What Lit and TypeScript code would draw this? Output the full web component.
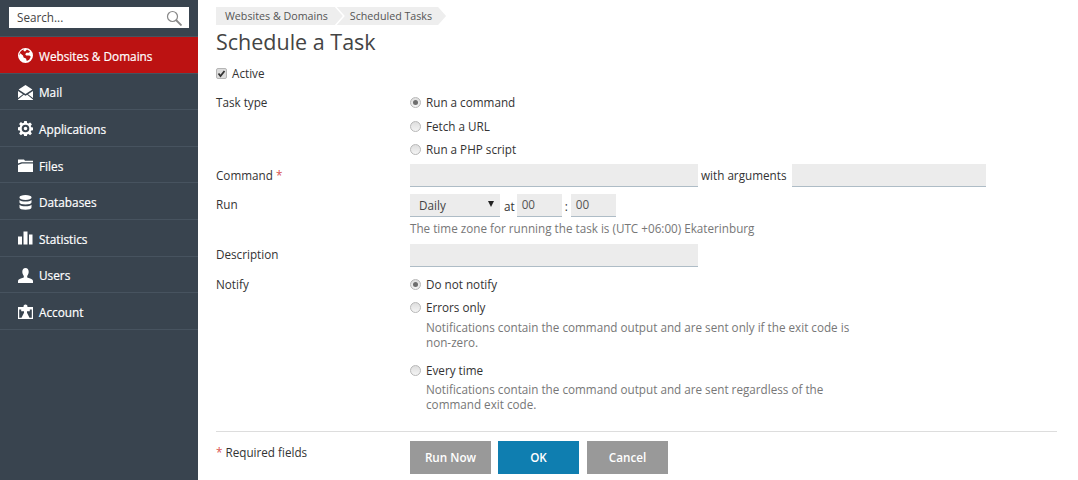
import { LitElement, html, css, svg } from "lit";
import { customElement } from "lit/decorators.js";

const icons: Record<string, unknown> = {
  globe: svg`<path fill-rule="evenodd" d="M7.500 0a7.500 7.500 0 1 0 0 15 7.500 7.500 0 0 0 0-15zM9 1.600l3 1.600-1 1.600H8.400L7.200 6.200l1 1.400h3.200l1.400 1.200-1.600 3-2.400 1.200-.8-2.600-2.400-1-.6-1.800L2.200 5.200 1.600 7.400 1.400 6A6 6 0 0 1 6 1.600l-.6 1.200 1.600.6z"/>`,
  mail: svg`<path d="M7.500 0 14.400 4.600 7.500 9 .6 4.600zM0 6l5 3.200L0 13zM15 6v7l-5-3.800zM5.800 9.800l1.700 1 1.700-1L15 14.400V15H0v-.6z"/>`,
  gear: svg`<path fill-rule="evenodd" d="M6.200 0h2.600l.3 2 1.300.6 1.700-1.200 1.800 1.800-1.200 1.700.6 1.300 2 .3v2.600l-2 .3-.6 1.300 1.200 1.700-1.800 1.800-1.700-1.200-1.300.6-.3 2H6.200l-.3-2-1.300-.6-1.700 1.200-1.800-1.800 1.200-1.700-.6-1.300-2-.3V6.200l2-.3.6-1.300-1.200-1.700 1.800-1.800 1.700 1.200 1.300-.6zM7.500 3.700a3.800 3.800 0 1 0 0 7.600 3.800 3.800 0 0 0 0-7.600zm0 2a1.800 1.800 0 1 1 0 3.600 1.800 1.800 0 0 1 0-3.600z"/>`,
  folder: svg`<path d="M0 1.500h6l1 1.200h8v1.600H3.500L0 5.500zM0 7l4-1.500h11v8.500H0z"/>`,
  db: svg`<path d="M7.500 0C11 0 13.500 1 13.500 2.200v.6c0 1.200-2.500 2.200-6 2.200s-6-1-6-2.200v-.6C1.500 1 4 0 7.500 0zM1.500 5c1.200 1 3.500 1.500 6 1.500S12.300 6 13.500 5v2.500c0 1.200-2.500 2-6 2s-6-.8-6-2zM1.500 9.800c1.200 1 3.500 1.500 6 1.500s4.800-.5 6-1.500v2.700c0 1.300-2.500 2.300-6 2.300s-6-1-6-2.300z"/>`,
  stats: svg`<path d="M0 5.500h4v8H0zM5.500.5h4v13h-4zM11 3.500h3.500v10H11z"/>`,
  user: svg`<path d="M7.500 0c2 0 3.200 1.500 3.200 3.800 0 1.700-.7 3.200-1.500 4.200v1.400l3 1.200c1.600.6 2.800 1.400 2.800 2.400v2H0v-2c0-1 1.200-1.800 2.800-2.400l3-1.200V8C5 7 4.300 5.500 4.300 3.800 4.300 1.500 5.500 0 7.500 0z"/>`,
  account: svg`<path fill-rule="evenodd" d="M0 3h5.600a2 2 0 1 1 3.800 0H15v12H0zM1.200 4.200v9.600h2.300l2.500-5V7.200H3.200V5.400H1.200zm12.600 0v1.200h-2v1.800H9v1.600l2.500 5h2.300z"/>`,
};

const nav: [string, string, boolean?][] = [
  ["globe", "Websites & Domains", true],
  ["mail", "Mail"],
  ["gear", "Applications"],
  ["folder", "Files"],
  ["db", "Databases"],
  ["stats", "Statistics"],
  ["user", "Users"],
  ["account", "Account"],
];

@customElement("app-root")
export class AppRoot extends LitElement {
  static styles = css`
    :host {
      display: flex;
      width: 1078px;
      height: 480px;
      overflow: hidden;
      font-family: "Open Sans", sans-serif;
      font-size: 11.7px;
      line-height: 17px;
      color: #333;
      background: #fff;
    }
    .side {
      width: 198px;
      flex: none;
      background: #39444f;
      display: flex;
      flex-direction: column;
    }
    .searchbox {
      height: 36px;
      flex: none;
      box-sizing: content-box;
      padding: 0;
      border-bottom: 1px solid #47535f;
      display: flex;
      align-items: flex-start;
    }
    .search {
      flex: 1;
      margin: 7px 9px 0;
      height: 21px;
      background: #fff;
      display: flex;
      align-items: center;
      justify-content: space-between;
      padding: 0 7px 0 8px;
      color: #444;
    }
    .search svg { width: 16px; height: 16px; }
    .item {
      height: 36.6px;
      flex: none;
      box-sizing: border-box;
      border-bottom: 1px solid #47535f;
      display: flex;
      align-items: center;
      gap: 6px;
      padding: 3px 0 0 18px;
      color: #fff;
      font-size: 11.8px;
      -webkit-text-stroke: 0.2px #fff;
    }
    .item.active {
      background: #bc1212;
    }
    .item svg {
      width: 15px;
      height: 15px;
      fill: #fff;
      flex: none;
      margin-top: -1px;
    }
    .main {
      flex: 1;
      padding: 7px 21px 0 18px;
      display: flex;
      flex-direction: column;
      min-width: 0;
    }
    .crumbs { display: flex; height: 18px; color: #555; font-size: 10.7px; line-height: 18px; }
    .crumb {
      background: #eee;
      padding: 0 15px 0 9px;
      clip-path: polygon(0 0, calc(100% - 8px) 0, 100% 50%, calc(100% - 8px) 100%, 0 100%);
    }
    .crumb + .crumb {
      margin-left: -6px;
      padding: 0 14px 0 13px;
      clip-path: polygon(0 0, calc(100% - 8px) 0, 100% 50%, calc(100% - 8px) 100%, 0 100%, 8px 50%);
    }
    h1 {
      margin: 2px 0 0;
      font-size: 21.5px;
      line-height: 29px;
      font-weight: 400;
      color: #444;
    }
    .active-row {
      display: flex;
      align-items: center;
      gap: 5px;
      margin-top: 9px;
      height: 17px;
    }
    .form {
      display: grid;
      grid-template-columns: 194px 1fr;
      margin-top: 12px;
    }
    .stack { display: flex; flex-direction: column; }
    .r {
      display: flex;
      align-items: center;
      gap: 5px;
      height: 17px;
    }
    .gap6 { margin-top: 6.5px; }
    .radio {
      width: 9px;
      height: 9px;
      border-radius: 50%;
      border: 1px solid #b8b8b8;
      background: linear-gradient(#dedede, #f4f4f4);
      flex: none;
      display: flex;
      align-items: center;
      justify-content: center;
    }
    .radio.on::after {
      content: "";
      width: 5px;
      height: 5px;
      border-radius: 50%;
      background: #6e6e6e;
    }
    .check {
      width: 9px;
      height: 9px;
      border: 1px solid #b5b5b5;
      border-radius: 2px;
      background: #dcdcdc;
      flex: none;
      display: block;
    }
    .check svg { display: block; width: 9px; height: 9px; }
    .inp {
      background: #ececec;
      border-bottom: 1px solid #aebcc6;
      height: 22px;
      color: #555;
    }
    .w288 { width: 288px; }
    .w194 { width: 194px; }
    .w45 { width: 40px; line-height: 20px; padding-left: 5px; }
    .line { display: flex; align-items: center; height: 23px; }
    .req { color: #d9534f; }
    .sel {
      width: 81px;
      padding-left: 9px;
      line-height: 22px;
      position: relative;
      color: #444;
    }
    .sel i {
      width: 0;
      height: 0;
      border-left: 3.5px solid transparent;
      border-right: 3.5px solid transparent;
      border-top: 6px solid #222;
      position: absolute;
      right: 6px;
      top: 7px;
    }
    .hint { color: #777; }
    .note { margin-left: 16px; width: 430px; line-height: 15px; }
    .hr { height: 1px; background: #ddd; margin-top: 19px; }
    .foot {
      display: grid;
      grid-template-columns: 194px 1fr;
      margin-top: 9px;
    }
    .btns { display: flex; gap: 7px; }
    .btn {
      width: 81px;
      height: 33px;
      background: #999;
      color: #fff;
      font-weight: 600;
      display: flex;
      align-items: center;
      justify-content: center;
    }
    .btn.ok { background: #0f7eb0; }
    .btn.last { margin-left: 1px; }
    .lab-cmd { margin-top: 9px; }
    .line-cmd { margin-top: 6px; }
    .lab-run { margin-top: 9px; }
    .line-run { margin-top: 7px; }
    .at { margin: 2px 2px 0 4px; }
    .colon { margin: 2px 3px 0 3px; }
    .args { margin: 0 6px 0 3px; white-space: nowrap; }
    .hint-tz { margin-top: 3px; }
    .lab-desc { margin-top: 9px; }
    .line-desc { margin-top: 7px; }
    .lab-notify, .stack-notify { margin-top: 9px; }
    .gap-err { margin-top: 6px; }
    .note-a { margin-top: 4px; }
    .r-every { margin-top: 12px; }
    .note-b { margin-top: 3px; }
    .req-foot { margin-top: 3px; }
  `;

  render() {
    return html`
      <aside class="side">
        <div class="searchbox">
          <div class="search">
            <span>Search...</span>
            <svg viewBox="0 0 16 16" fill="none" stroke="#888" stroke-width="1.2">
              <circle cx="6.5" cy="6.5" r="5" />
              <path d="M10 10l5.500 5.500" stroke-width="1.8" />
            </svg>
          </div>
        </div>
        ${nav.map(
          ([i, t, a]) => html`<div class="item ${a ? "active" : ""}">
            <svg viewBox="0 0 15 15">${icons[i]}</svg><span>${t}</span>
          </div>`
        )}
      </aside>
      <main class="main">
        <nav class="crumbs">
          <span class="crumb">Websites &amp; Domains</span>
          <span class="crumb">Scheduled Tasks</span>
        </nav>
        <h1>Schedule a Task</h1>
        <div class="active-row">
          <span class="check"><svg viewBox="0 0 9 9"><path d="M1.500 4.500l2 2.500 4-5" fill="none" stroke="#333" stroke-width="1.8"/></svg></span>
          <span>Active</span>
        </div>
        <div class="form">
          <div>Task type</div>
          <div class="stack">
            <div class="r"><span class="radio on"></span>Run a command</div>
            <div class="r gap6"><span class="radio"></span>Fetch a URL</div>
            <div class="r gap6"><span class="radio"></span>Run a PHP script</div>
          </div>

          <div class="lab-cmd">Command <span class="req">*</span></div>
          <div class="line line-cmd">
            <span class="inp w288"></span><span class="args">with arguments</span><span class="inp w194"></span>
          </div>

          <div class="lab-run">Run</div>
          <div class="line line-run">
            <span class="inp sel">Daily<i></i></span>
            <span class="at">at</span>
            <span class="inp w45">00</span>
            <span class="colon">:</span>
            <span class="inp w45">00</span>
          </div>

          <div></div>
          <div class="hint hint-tz">The time zone for running the task is (UTC +06:00) Ekaterinburg</div>

          <div class="lab-desc">Description</div>
          <div class="line line-desc"><span class="inp w288"></span></div>

          <div class="lab-notify">Notify</div>
          <div class="stack stack-notify">
            <div class="r"><span class="radio on"></span>Do not notify</div>
            <div class="r gap-err"><span class="radio"></span>Errors only</div>
            <div class="hint note note-a">Notifications contain the command output and are sent only if the exit code is non-zero.</div>
            <div class="r r-every"><span class="radio"></span>Every time</div>
            <div class="hint note note-b">Notifications contain the command output and are sent regardless of the command exit code.</div>
          </div>
        </div>
        <div class="hr"></div>
        <div class="foot">
          <div class="req-foot"><span class="req">*</span> Required fields</div>
          <div class="btns">
            <div class="btn">Run Now</div>
            <div class="btn ok">OK</div>
            <div class="btn last">Cancel</div>
          </div>
        </div>
      </main>
    `;
  }
}
